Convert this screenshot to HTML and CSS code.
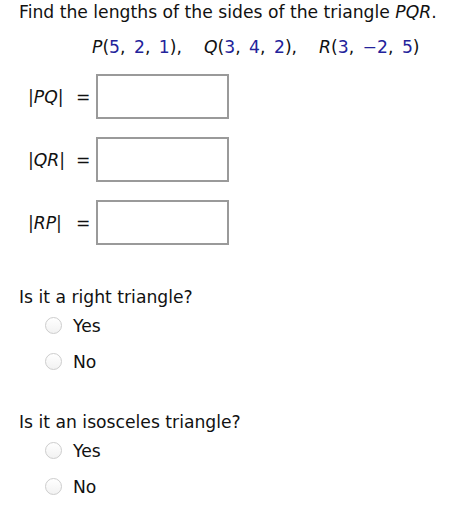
FILE: index.html
```html
<!DOCTYPE html>
<html>
<head>
<meta charset="utf-8">
<link rel="stylesheet" href="styles.css">
</head>
<body>
<div class="page">
  <p class="title">Find the lengths of the sides of the triangle <i>PQR</i>.</p>
  <p class="points">
    <span class="pt"><i>P</i>(<span class="n">5</span>, <span class="n">2</span>, <span class="n">1</span>),</span>
    <span class="pt"><i>Q</i>(<span class="n">3</span>, <span class="n">4</span>, <span class="n">2</span>),</span>
    <span class="pt"><i>R</i>(<span class="n">3</span>, <span class="n">−2</span>, <span class="n">5</span>)</span>
  </p>
  <div class="rows">
    <div class="row"><span class="lbl">|<i>PQ</i>|</span><span class="eq">=</span><span class="box"></span></div>
    <div class="row"><span class="lbl">|<i>QR</i>|</span><span class="eq">=</span><span class="box"></span></div>
    <div class="row"><span class="lbl">|<i>RP</i>|</span><span class="eq">=</span><span class="box"></span></div>
  </div>
  <div class="q q1">
    <p class="qt">Is it a right triangle?</p>
    <div class="opt"><span class="radio"></span><span>Yes</span></div>
    <div class="opt"><span class="radio"></span><span>No</span></div>
  </div>
  <div class="q q2">
    <p class="qt">Is it an isosceles triangle?</p>
    <div class="opt"><span class="radio"></span><span>Yes</span></div>
    <div class="opt"><span class="radio"></span><span>No</span></div>
  </div>
</div>
</body>
</html>
```

FILE: styles.css
```css
html, body {
  margin: 0;
  padding: 0;
  background: #ffffff;
}
body {
  font-family: "DejaVu Sans", Verdana, sans-serif;
  font-size: 17.2px;
  color: #111111;
}
.page {
  padding: 0 0 0 19px;
  display: flex;
  flex-direction: column;
}
p { margin: 0; }
.title {
  line-height: 22px;
  margin-top: 1px;
}
.points {
  margin-top: 13px;
  padding-left: 73px;
  line-height: 22px;
  display: flex;
  gap: 22px;
  word-spacing: 3px;
}
.n { color: #23239b; }
.rows {
  margin-top: 16px;
  display: flex;
  flex-direction: column;
  gap: 18px;
}
.row {
  display: flex;
  align-items: center;
}
.lbl {
  box-sizing: border-box;
  width: 57px;
  padding-left: 9px;
}
.eq {
  width: 20px;
}
.box {
  width: 129px;
  height: 41px;
  border: 2px solid #9a9a9a;
  background: #fff;
}
.q1 { margin-top: 41px; }
.q2 { margin-top: 31px; }
.qt { line-height: 22px; }
.opt {
  display: flex;
  align-items: center;
  gap: 11px;
  padding-left: 26px;
  height: 36px;
}
.radio {
  box-sizing: border-box;
  width: 17px;
  height: 17px;
  margin-top: -2px;
  border-radius: 50%;
  border: 1.5px solid #cdcdcd;
  background: linear-gradient(#ffffff, #f2f2f2);
}
```
